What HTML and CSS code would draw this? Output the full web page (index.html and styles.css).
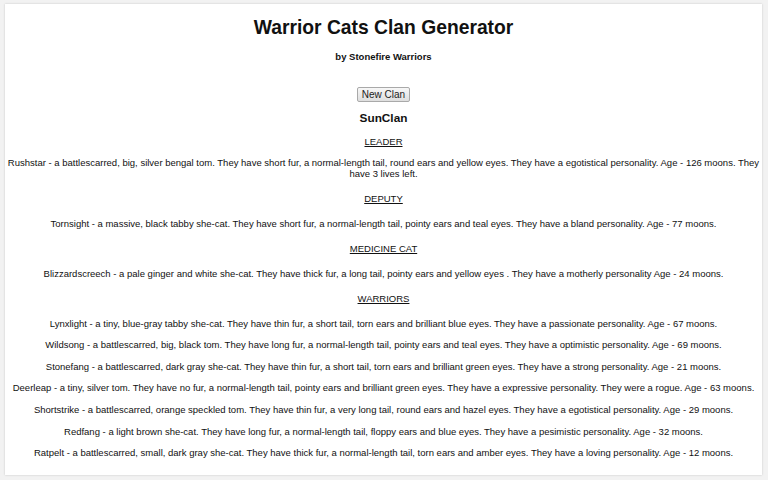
FILE: index.html
```html
<!DOCTYPE html>
<html>
<head>
<meta charset="utf-8">
<link rel="stylesheet" href="styles.css">
</head>
<body>
<div class="card">
  <h1 class="title">Warrior Cats Clan Generator</h1>
  <p class="byline">by Stonefire Warriors</p>
  <div class="btn-row"><button class="btn">New Clan</button></div>
  <h2 class="clan">SunClan</h2>
  <p class="rank first">LEADER</p>
  <p class="cat">Rushstar - a battlescarred, big, silver bengal tom. They have short fur, a normal-length tail, round ears and yellow eyes. They have a egotistical personality. Age - 126 moons. They have 3 lives left.</p>
  <p class="rank">DEPUTY</p>
  <p class="cat">Tornsight - a massive, black tabby she-cat. They have short fur, a normal-length tail, pointy ears and teal eyes. They have a bland personality. Age - 77 moons.</p>
  <p class="rank">MEDICINE CAT</p>
  <p class="cat">Blizzardscreech - a pale ginger and white she-cat. They have thick fur, a long tail, pointy ears and yellow eyes . They have a motherly personality Age - 24 moons.</p>
  <p class="rank">WARRIORS</p>
  <p class="cat">Lynxlight - a tiny, blue-gray tabby she-cat. They have thin fur, a short tail, torn ears and brilliant blue eyes. They have a passionate personality. Age - 67 moons.</p>
  <p class="cat">Wildsong - a battlescarred, big, black tom. They have long fur, a normal-length tail, pointy ears and teal eyes. They have a optimistic personality. Age - 69 moons.</p>
  <p class="cat">Stonefang - a battlescarred, dark gray she-cat. They have thin fur, a short tail, torn ears and brilliant green eyes. They have a strong personality. Age - 21 moons.</p>
  <p class="cat">Deerleap - a tiny, silver tom. They have no fur, a normal-length tail, pointy ears and brilliant green eyes. They have a expressive personality. They were a rogue. Age - 63 moons.</p>
  <p class="cat">Shortstrike - a battlescarred, orange speckled tom. They have thin fur, a very long tail, round ears and hazel eyes. They have a egotistical personality. Age - 29 moons.</p>
  <p class="cat">Redfang - a light brown she-cat. They have long fur, a normal-length tail, floppy ears and blue eyes. They have a pesimistic personality. Age - 32 moons.</p>
  <p class="cat">Ratpelt - a battlescarred, small, dark gray she-cat. They have thick fur, a normal-length tail, torn ears and amber eyes. They have a loving personality. Age - 12 moons.</p>
</div>
</body>
</html>
```
FILE: styles.css
```css
html, body {
  margin: 0;
  padding: 0;
  background: #f2f2f2;
}
body {
  padding: 4px 6px 5px 5px;
  font-family: "Liberation Sans", Arial, sans-serif;
  color: #111;
}
.card {
  background: #fff;
  box-shadow: 0 0 2px rgba(0,0,0,0.18);
  text-align: center;
  padding: 1px 1px 0 1px;
  height: 471px;
  box-sizing: border-box;
  overflow: hidden;
}
.title {
  font-size: 19.3px;
  font-weight: bold;
  margin: 11px 0 0 0;
  line-height: 24px;
}
.byline {
  font-size: 9.5px;
  font-weight: bold;
  margin: 11px 0 0 0;
  line-height: 12px;
}
.btn-row {
  margin-top: 24px;
  display: flex;
  justify-content: center;
}
.btn {
  font-family: "Liberation Sans", Arial, sans-serif;
  font-size: 10px;
  color: #222;
  padding: 0 4px;
  height: 15px;
  border: 1px solid #a9a9a9;
  border-radius: 2px;
  background: linear-gradient(#f7f7f7, #dedede);
  line-height: 13px;
}
.clan {
  font-size: 11.8px;
  font-weight: bold;
  margin: 9px 0 0 0;
  line-height: 14px;
}
.rank {
  font-size: 9.5px;
  text-decoration: underline;
  margin: 14.5px 0 0 0;
  line-height: 12px;
}
.rank.first {
  margin-top: 11px;
}
.cat {
  font-size: 9.5px;
  line-height: 11px;
  margin: 10.67px 0 0 0;
}
.rank + .cat {
  margin-top: 12.5px;
}
.first + .cat {
  margin-top: 8.5px;
}
```
